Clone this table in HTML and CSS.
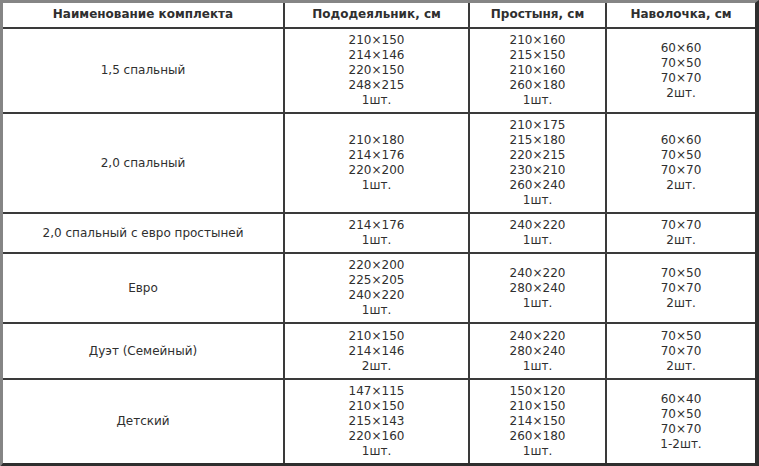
FILE: index.html
```html
<!DOCTYPE html>
<html lang="ru">
<head>
<meta charset="utf-8">
<title>Размеры комплектов</title>
<link rel="stylesheet" href="styles.css">
</head>
<body>
<table class="sizes">
  <thead>
    <tr class="head">
      <th class="c1">Наименование комплекта</th>
      <th class="c2">Пододеяльник, см</th>
      <th class="c3">Простыня, см</th>
      <th class="c4">Наволочка, см</th>
    </tr>
  </thead>
  <tbody>
    <tr>
      <td>1,5 спальный</td>
      <td>210×150<br>214×146<br>220×150<br>248×215<br>1шт.</td>
      <td>210×160<br>215×150<br>210×160<br>260×180<br>1шт.</td>
      <td>60×60<br>70×50<br>70×70<br>2шт.</td>
    </tr>
    <tr>
      <td>2,0 спальный</td>
      <td>210×180<br>214×176<br>220×200<br>1шт.</td>
      <td>210×175<br>215×180<br>220×215<br>230×210<br>260×240<br>1шт.</td>
      <td>60×60<br>70×50<br>70×70<br>2шт.</td>
    </tr>
    <tr>
      <td>2,0 спальный с евро простыней</td>
      <td>214×176<br>1шт.</td>
      <td>240×220<br>1шт.</td>
      <td>70×70<br>2шт.</td>
    </tr>
    <tr class="r-euro">
      <td>Евро</td>
      <td>220×200<br>225×205<br>240×220<br>1шт.</td>
      <td>240×220<br>280×240<br>1шт.</td>
      <td>70×50<br>70×70<br>2шт.</td>
    </tr>
    <tr class="r-duet">
      <td>Дуэт (Семейный)</td>
      <td>210×150<br>214×146<br>2шт.</td>
      <td>240×220<br>280×240<br>1шт.</td>
      <td>70×50<br>70×70<br>2шт.</td>
    </tr>
    <tr class="r-kids last">
      <td>Детский</td>
      <td>147×115<br>210×150<br>215×143<br>220×160<br>1шт.</td>
      <td>150×120<br>210×150<br>214×150<br>260×180<br>1шт.</td>
      <td>60×40<br>70×50<br>70×70<br>1-2шт.</td>
    </tr>
  </tbody>
</table>
</body>
</html>
```

FILE: styles.css
```css
html, body {
  margin: 0;
  padding: 0;
  background: #ffffff;
}

.sizes {
  width: 759px;
  table-layout: fixed;
  border-collapse: separate;
  border-spacing: 0;
  border-top: 3px solid #858585;
  border-left: 3px solid #858585;
  border-right: 4px solid #2e2e2e;
  border-bottom: 4px solid #2e2e2e;
  font-family: "DejaVu Sans", Verdana, sans-serif;
  font-size: 12px;
  line-height: 15px;
  color: #2f2f2f;
}

.sizes th,
.sizes td {
  box-sizing: border-box;
  text-align: center;
  vertical-align: middle;
  padding: 4px 2px;
  border-right: 2px solid #3a3a3a;
  border-bottom: 2px solid #3a3a3a;
}

.sizes th:last-child,
.sizes td:last-child {
  border-right: none;
}

.sizes tr.last td {
  border-bottom: none;
}

.sizes th {
  font-weight: bold;
  height: 26px;
  padding: 4px 2px 5px;
}

.c1 { width: 282px; }
.c2 { width: 185px; }
.c3 { width: 137px; }
.c4 { width: 148px; }

.r-euro td { height: 69px; }
.r-duet td { height: 56px; }
.r-kids td { height: 83px; }
```
